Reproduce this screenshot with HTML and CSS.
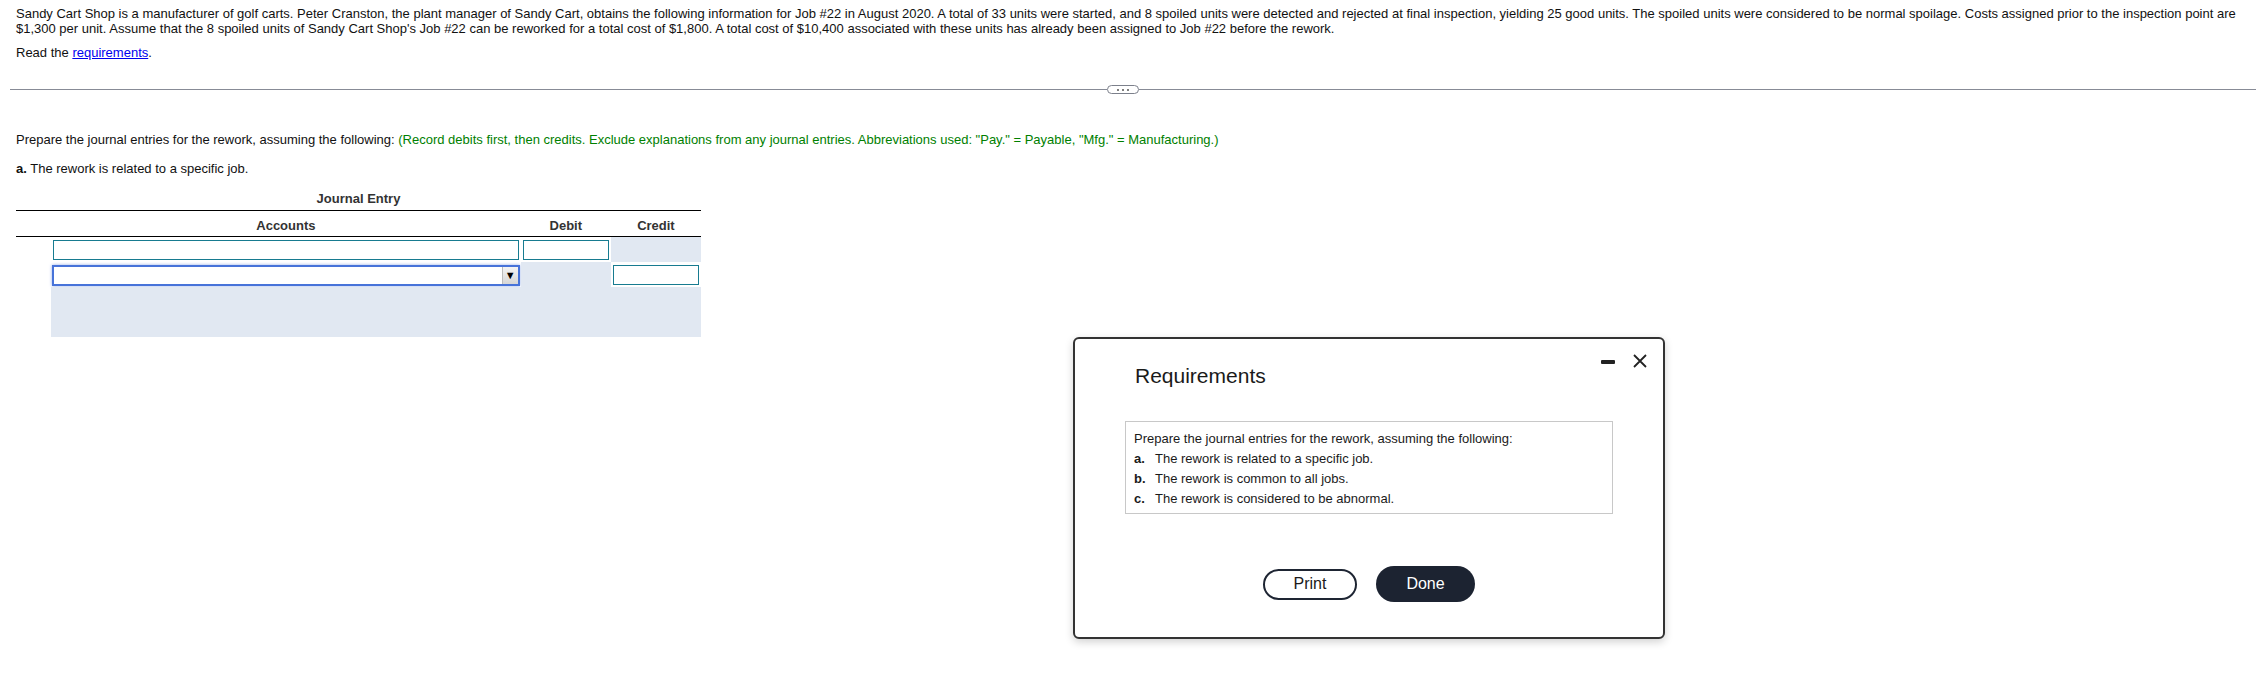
FILE: index.html
```html
<!DOCTYPE html>
<html lang="en">
<head>
    <meta charset="UTF-8">
    <meta name="viewport" content="width=device-width, initial-scale=1.0">
    <title>Sandy Cart Shop - Rework</title>
    <link rel="stylesheet" href="styles.css">
</head>
<body>
    <div class="question">
        <p class="intro">Sandy Cart Shop is a manufacturer of golf carts. Peter Cranston, the plant manager of Sandy Cart, obtains the following information for Job #22 in August 2020. A total of 33 units were started, and 8 spoiled units were detected and rejected at final inspection, yielding 25 good units. The spoiled units were considered to be normal spoilage. Costs assigned prior to the inspection point are $1,300 per unit. Assume that the 8 spoiled units of Sandy Cart Shop's Job #22 can be reworked for a total cost of $1,800. A total cost of $10,400 associated with these units has already been assigned to Job #22 before the rework.</p>
        <p class="read">Read the <a href="#requirements">requirements</a>.</p>
    </div>

    <!-- collapsible divider -->
    <div class="divider">
        <span class="divider-line"></span>
        <span class="divider-pill"><i></i><i></i><i></i></span>
        <span class="divider-line"></span>
    </div>

    <div class="task">
        <p class="prompt">Prepare the journal entries for the rework, assuming the following: <span class="hint">(Record debits first, then credits. Exclude explanations from any journal entries. Abbreviations used: "Pay." = Payable, "Mfg." = Manufacturing.)</span></p>
        <p class="part"><b>a.</b> The rework is related to a specific job.</p>

        <div class="journal">
            <div class="journal-title">Journal Entry</div>
            <table class="journal-table">
                <thead>
                    <tr>
                        <th class="col-gap"></th>
                        <th class="col-account">Accounts</th>
                        <th class="col-amount">Debit</th>
                        <th class="col-amount">Credit</th>
                    </tr>
                </thead>
                <tbody>
                    <tr>
                        <td></td>
                        <td><input class="field" type="text"></td>
                        <td><input class="field" type="text"></td>
                        <td class="shaded"></td>
                    </tr>
                    <tr>
                        <td></td>
                        <td class="select-cell">
                            <div class="select-box"><span class="select-arrow">&#9660;</span></div>
                        </td>
                        <td class="shaded"></td>
                        <td><input class="field" type="text"></td>
                    </tr>
                    <tr class="blank-row">
                        <td></td>
                        <td class="shaded" colspan="3"></td>
                    </tr>
                </tbody>
            </table>
        </div>
    </div>

    <!-- Requirements popup -->
    <div class="modal" id="requirements">
        <div class="modal-controls">
            <span class="minimize"></span>
            <svg class="close" width="14" height="14" viewBox="0 0 14 14">
                <path d="M1 1 L13 13 M13 1 L1 13" stroke="#222" stroke-width="1.8" fill="none"/>
            </svg>
        </div>
        <h2 class="modal-title">Requirements</h2>
        <div class="req-box">
            <p>Prepare the journal entries for the rework, assuming the following:</p>
            <p><b>a.</b>The rework is related to a specific job.</p>
            <p><b>b.</b>The rework is common to all jobs.</p>
            <p><b>c.</b>The rework is considered to be abnormal.</p>
        </div>
        <div class="modal-actions">
            <button class="btn btn-outline">Print</button>
            <button class="btn btn-dark">Done</button>
        </div>
    </div>
</body>
</html>
```

FILE: styles.css
```css
* {
    box-sizing: border-box;
    margin: 0;
    padding: 0;
}

body {
    font-family: 'Liberation Sans', Arial, sans-serif;
    font-size: 13px;
    line-height: 15px;
    color: #111;
    background: #fff;
    width: 2256px;
    height: 688px;
    position: relative;
    overflow: hidden;
}

.question {
    padding: 6px 12px 0 16px;
}

.read {
    margin-top: 9px;
}

.read a {
    color: #0000ee;
    text-decoration: underline;
}

/* Divider with the "more" pill */
.divider {
    display: grid;
    grid-template-columns: 1097px 32px 1fr;
    align-items: center;
    height: 9px;
    margin: 25px 0 0 10px;
}

.divider-line {
    height: 1px;
    background: #878b96;
}

.divider-pill {
    height: 9px;
    border: 1px solid #7c808b;
    border-radius: 5px;
    background: #fff;
    display: flex;
    align-items: center;
    justify-content: center;
    gap: 3px;
}

.divider-pill i {
    width: 2px;
    height: 2px;
    background: #555;
    border-radius: 50%;
}

.task {
    padding: 0 16px;
}

.prompt {
    margin-top: 38px;
}

.hint {
    color: #008000;
}

.part {
    margin-top: 14px;
}

/* Journal entry table */
.journal {
    width: 685px;
    margin-top: 15px;
}

.journal-title {
    text-align: center;
    font-weight: bold;
    color: #333;
    margin-bottom: 4px;
}

.journal-table {
    width: 685px;
    border-collapse: separate;
    border-spacing: 0;
    table-layout: fixed;
}

.journal-table th {
    font-weight: bold;
    color: #333;
    padding: 7px 0 3px;
    border-top: 1px solid #000;
    border-bottom: 1px solid #000;
    text-align: center;
}

.col-gap {
    width: 35px;
}

.col-account {
    width: 469px;
}

.col-amount {
    width: 90px;
}

.journal-table td {
    height: 25px;
    padding: 3px 2px 2px;
    vertical-align: top;
}

.journal-table td.shaded {
    background: #e1e8f2;
}

.blank-row td {
    height: 50px;
}

.field {
    display: block;
    width: 100%;
    height: 20px;
    border: 1px solid #177b90;
    background: #fff;
    outline: none;
}

.journal-table td.select-cell {
    padding: 3px 1px 1px;
}

.select-box {
    height: 21px;
    border: 2px solid #4773d9;
    box-shadow: 0 0 3px rgba(71, 115, 217, 0.6);
    background: #fff;
    display: flex;
    justify-content: flex-end;
}

.select-arrow {
    width: 16px;
    height: 17px;
    background: linear-gradient(#f4f4f4, #d6d6d6);
    border-left: 1px solid #bbb;
    font-size: 11px;
    line-height: 17px;
    text-align: center;
    color: #000;
}

/* Requirements popup */
.modal {
    position: absolute;
    left: 1073px;
    top: 337px;
    width: 592px;
    height: 302px;
    background: #fff;
    border: 2px solid #333;
    border-radius: 6px;
    box-shadow: 0 3px 8px rgba(0, 0, 0, 0.18);
    padding: 25px 50px 0;
}

.modal-controls {
    position: absolute;
    top: 15px;
    right: 16px;
    display: flex;
    align-items: center;
    gap: 18px;
}

.minimize {
    width: 14px;
    height: 4px;
    background: #222;
    border-radius: 1px;
    margin-top: 2px;
}

.modal-title {
    font-size: 21px;
    line-height: 24px;
    font-weight: normal;
    color: #1a1a1a;
    padding-left: 10px;
}

.req-box {
    margin-top: 33px;
    border: 1px solid #c8c8c8;
    padding: 7px 8px 4px;
    line-height: 20px;
    color: #1a1a1a;
}

.req-box b {
    display: inline-block;
    width: 21px;
}

.modal-actions {
    margin-top: 52px;
    display: flex;
    justify-content: center;
    align-items: center;
    gap: 19px;
}

.btn {
    font-family: 'Liberation Sans', Arial, sans-serif;
    font-size: 16px;
    border-radius: 18px;
    cursor: pointer;
}

.btn-outline {
    width: 94px;
    height: 31px;
    background: #fff;
    color: #1a1a1a;
    border: 2px solid #1e2533;
}

.btn-dark {
    width: 99px;
    height: 36px;
    background: #1c2331;
    color: #fff;
    border: none;
}
```
